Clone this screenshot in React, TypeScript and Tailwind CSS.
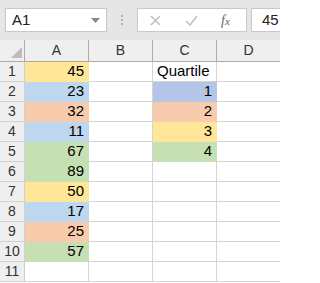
import React from "react";

const font = { fontFamily: '"Liberation Sans", Arial, sans-serif' };

const fills: Record<string, string> = {
  y: "bg-[#ffe699] border-[#ffe699]",
  b: "bg-[#bdd7ee] border-[#bdd7ee]",
  o: "bg-[#f8cbad] border-[#f8cbad]",
  g: "bg-[#c6e0b4] border-[#c6e0b4]",
  q: "bg-[#b4c6e7] border-[#b4c6e7]",
  w: "bg-white border-[#d4d4d4]",
};

// [A value, A fill, C value, C fill]
const rows: [string, string, string, string][] = [
  ["45", "y", "Quartile", "w"],
  ["23", "b", "1", "q"],
  ["32", "o", "2", "o"],
  ["11", "b", "3", "y"],
  ["67", "g", "4", "g"],
  ["89", "g", "", "w"],
  ["50", "y", "", "w"],
  ["17", "b", "", "w"],
  ["25", "o", "", "w"],
  ["57", "g", "", "w"],
  ["", "w", "", "w"],
];

function Cell({ v, fill, left }: { v: string; fill: string; left?: boolean }) {
  return (
    <div
      className={`h-[20px] border-r border-b flex items-center px-[4px] text-[15px] text-black ${
        left ? "justify-start" : "justify-end"
      } ${fills[fill]}`}
    >
      {v}
    </div>
  );
}

export default function App() {
  return (
    <div className="w-[280px] h-[283px] overflow-hidden bg-white" style={font}>
      {/* formula bar */}
      <div className="h-[40px] bg-[#e6e6e6] flex items-start pt-[8px] pl-[5px]">
        <div className="w-[102px] h-[24px] bg-white border border-[#c8c8c8] flex items-center justify-between pl-[6px] pr-[6px]">
          <span className="text-[15px] text-[#222]">A1</span>
          <svg width="9" height="5" viewBox="0 0 9 5">
            <polygon points="0,0 9,0 4.5,5" fill="#8a8a8a" />
          </svg>
        </div>
        <div className="w-[30px] h-[24px] flex flex-col items-center justify-center gap-[2px]">
          <div className="w-[2px] h-[2px] bg-[#b0b0b0]" />
          <div className="w-[2px] h-[2px] bg-[#b0b0b0]" />
          <div className="w-[2px] h-[2px] bg-[#b0b0b0]" />
        </div>
        <div className="w-[110px] h-[24px] bg-white border border-[#c8c8c8] flex items-center">
          <svg className="ml-[12px]" width="11" height="11" viewBox="0 0 11 11">
            <path d="M1 1 L10 10 M10 1 L1 10" stroke="#c0c0c0" strokeWidth="1.6" />
          </svg>
          <svg className="ml-[24px]" width="13" height="11" viewBox="0 0 13 11">
            <path d="M1 6 L5 10 L12 1" stroke="#c0c0c0" strokeWidth="1.6" fill="none" />
          </svg>
          <span
            className="ml-[23px] text-[14px] italic text-[#666]"
            style={{ fontFamily: '"Liberation Serif", serif' }}
          >
            f<span className="text-[11px]">x</span>
          </span>
        </div>
        <div className="ml-[4px] flex-1 h-[24px] bg-white border border-[#c8c8c8] border-r-0 flex items-center pl-[10px]">
          <span className="text-[15px] text-[#222]">45</span>
        </div>
      </div>

      {/* grid */}
      <div className="grid grid-cols-[25px_64px_64px_64px_64px]">
        <div className="h-[22px] bg-[#efefef] border-r border-b border-[#ababab] relative">
          <svg className="absolute right-[2px] bottom-[3px]" width="11" height="11" viewBox="0 0 11 11">
            <polygon points="11,0 11,11 0,11" fill="#bdbdbd" />
          </svg>
        </div>
        {["A", "B", "C", "D"].map((c) => (
          <div
            key={c}
            className="h-[22px] bg-[#efefef] border-r border-b border-[#ababab] flex items-center justify-center text-[14px] text-[#333]"
          >
            {c}
          </div>
        ))}
        {rows.map(([a, af, c, cf], i) => (
          <React.Fragment key={i}>
            <div className="h-[20px] bg-[#efefef] border-r border-b border-[#d0d0d0] flex items-center justify-center text-[14px] text-[#333]">
              {i + 1}
            </div>
            <Cell v={a} fill={af} />
            <Cell v="" fill="w" />
            <Cell v={c} fill={cf} left={c === "Quartile"} />
            <Cell v="" fill="w" />
          </React.Fragment>
        ))}
      </div>
    </div>
  );
}
